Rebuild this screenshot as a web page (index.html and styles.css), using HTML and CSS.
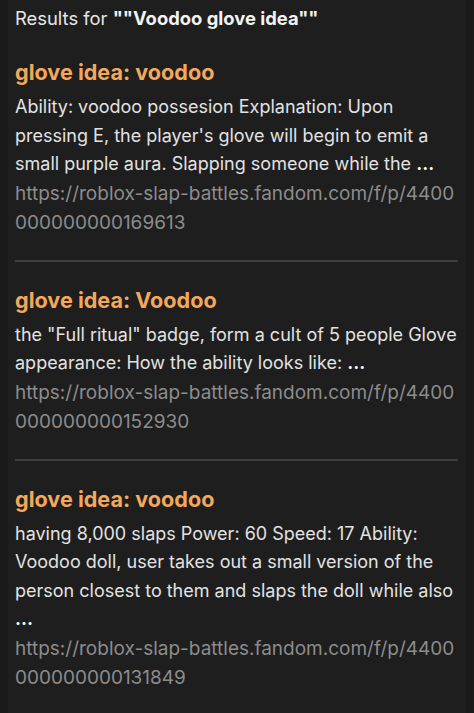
FILE: index.html
```html
<!DOCTYPE html>
<html>
<head>
<meta charset="utf-8">
<link rel="stylesheet" href="styles.css">
</head>
<body>
<div class="page">
  <p class="results-for">Results for <b>""Voodoo glove idea""</b></p>
  <div class="list">
    <div class="result">
      <h3 class="title">glove idea: voodoo</h3>
      <p class="snippet">Ability: voodoo possesion Explanation: Upon pressing E, the player's glove will begin to emit a small purple aura. Slapping someone while the <b>...</b></p>
      <p class="url">https://roblox-slap-battles.fandom.com/f/p/4400000000000169613</p>
    </div>
    <div class="result">
      <h3 class="title">glove idea: Voodoo</h3>
      <p class="snippet">the "Full ritual" badge, form a cult of 5 people Glove appearance: How the ability looks like: <b>...</b></p>
      <p class="url">https://roblox-slap-battles.fandom.com/f/p/4400000000000152930</p>
    </div>
    <div class="result">
      <h3 class="title">glove idea: voodoo</h3>
      <p class="snippet">having 8,000 slaps Power: 60 Speed: 17 Ability: Voodoo doll, user takes out a small version of the person closest to them and slaps the doll while also <b>...</b></p>
      <p class="url">https://roblox-slap-battles.fandom.com/f/p/4400000000000131849</p>
    </div>
  </div>
</div>
</body>
</html>
```
FILE: styles.css
```css
html, body {
  margin: 0;
  padding: 0;
  background: #1a1a1a;
}
body {
  font-family: Inter, "Noto Sans", sans-serif;
  color: #e2e2e2;
}
.page {
  margin: 0 8px;
  background: #1e1e1e;
  padding: 4px 8px 10px 7px;
  min-height: 703px;
  box-sizing: border-box;
}
.results-for {
  margin: 0;
  font-size: 18.4px;
  line-height: 28px;
  color: #e6e6e6;
}
.results-for b {
  font-weight: 700;
  color: #f2f2f2;
}
.list {
  display: flex;
  flex-direction: column;
}
.result {
  padding: 25px 0 22px;
  border-bottom: 2px solid #3e3e3e;
}
.result:last-child {
  border-bottom: none;
}
.result + .result {
  padding-top: 23px;
}
.title {
  margin: 0 0 6px;
  font-size: 21.6px;
  line-height: 30px;
  font-weight: 700;
  color: #f4a85b;
}
.snippet {
  margin: 0;
  font-size: 18px;
  line-height: 28.5px;
  color: #e2e2e2;
}
.snippet b {
  font-weight: 700;
  color: #f2f2f2;
}
.url {
  margin: 0;
  font-size: 19px;
  line-height: 29.5px;
  color: #8c8c8c;
  word-break: break-all;
}
```
